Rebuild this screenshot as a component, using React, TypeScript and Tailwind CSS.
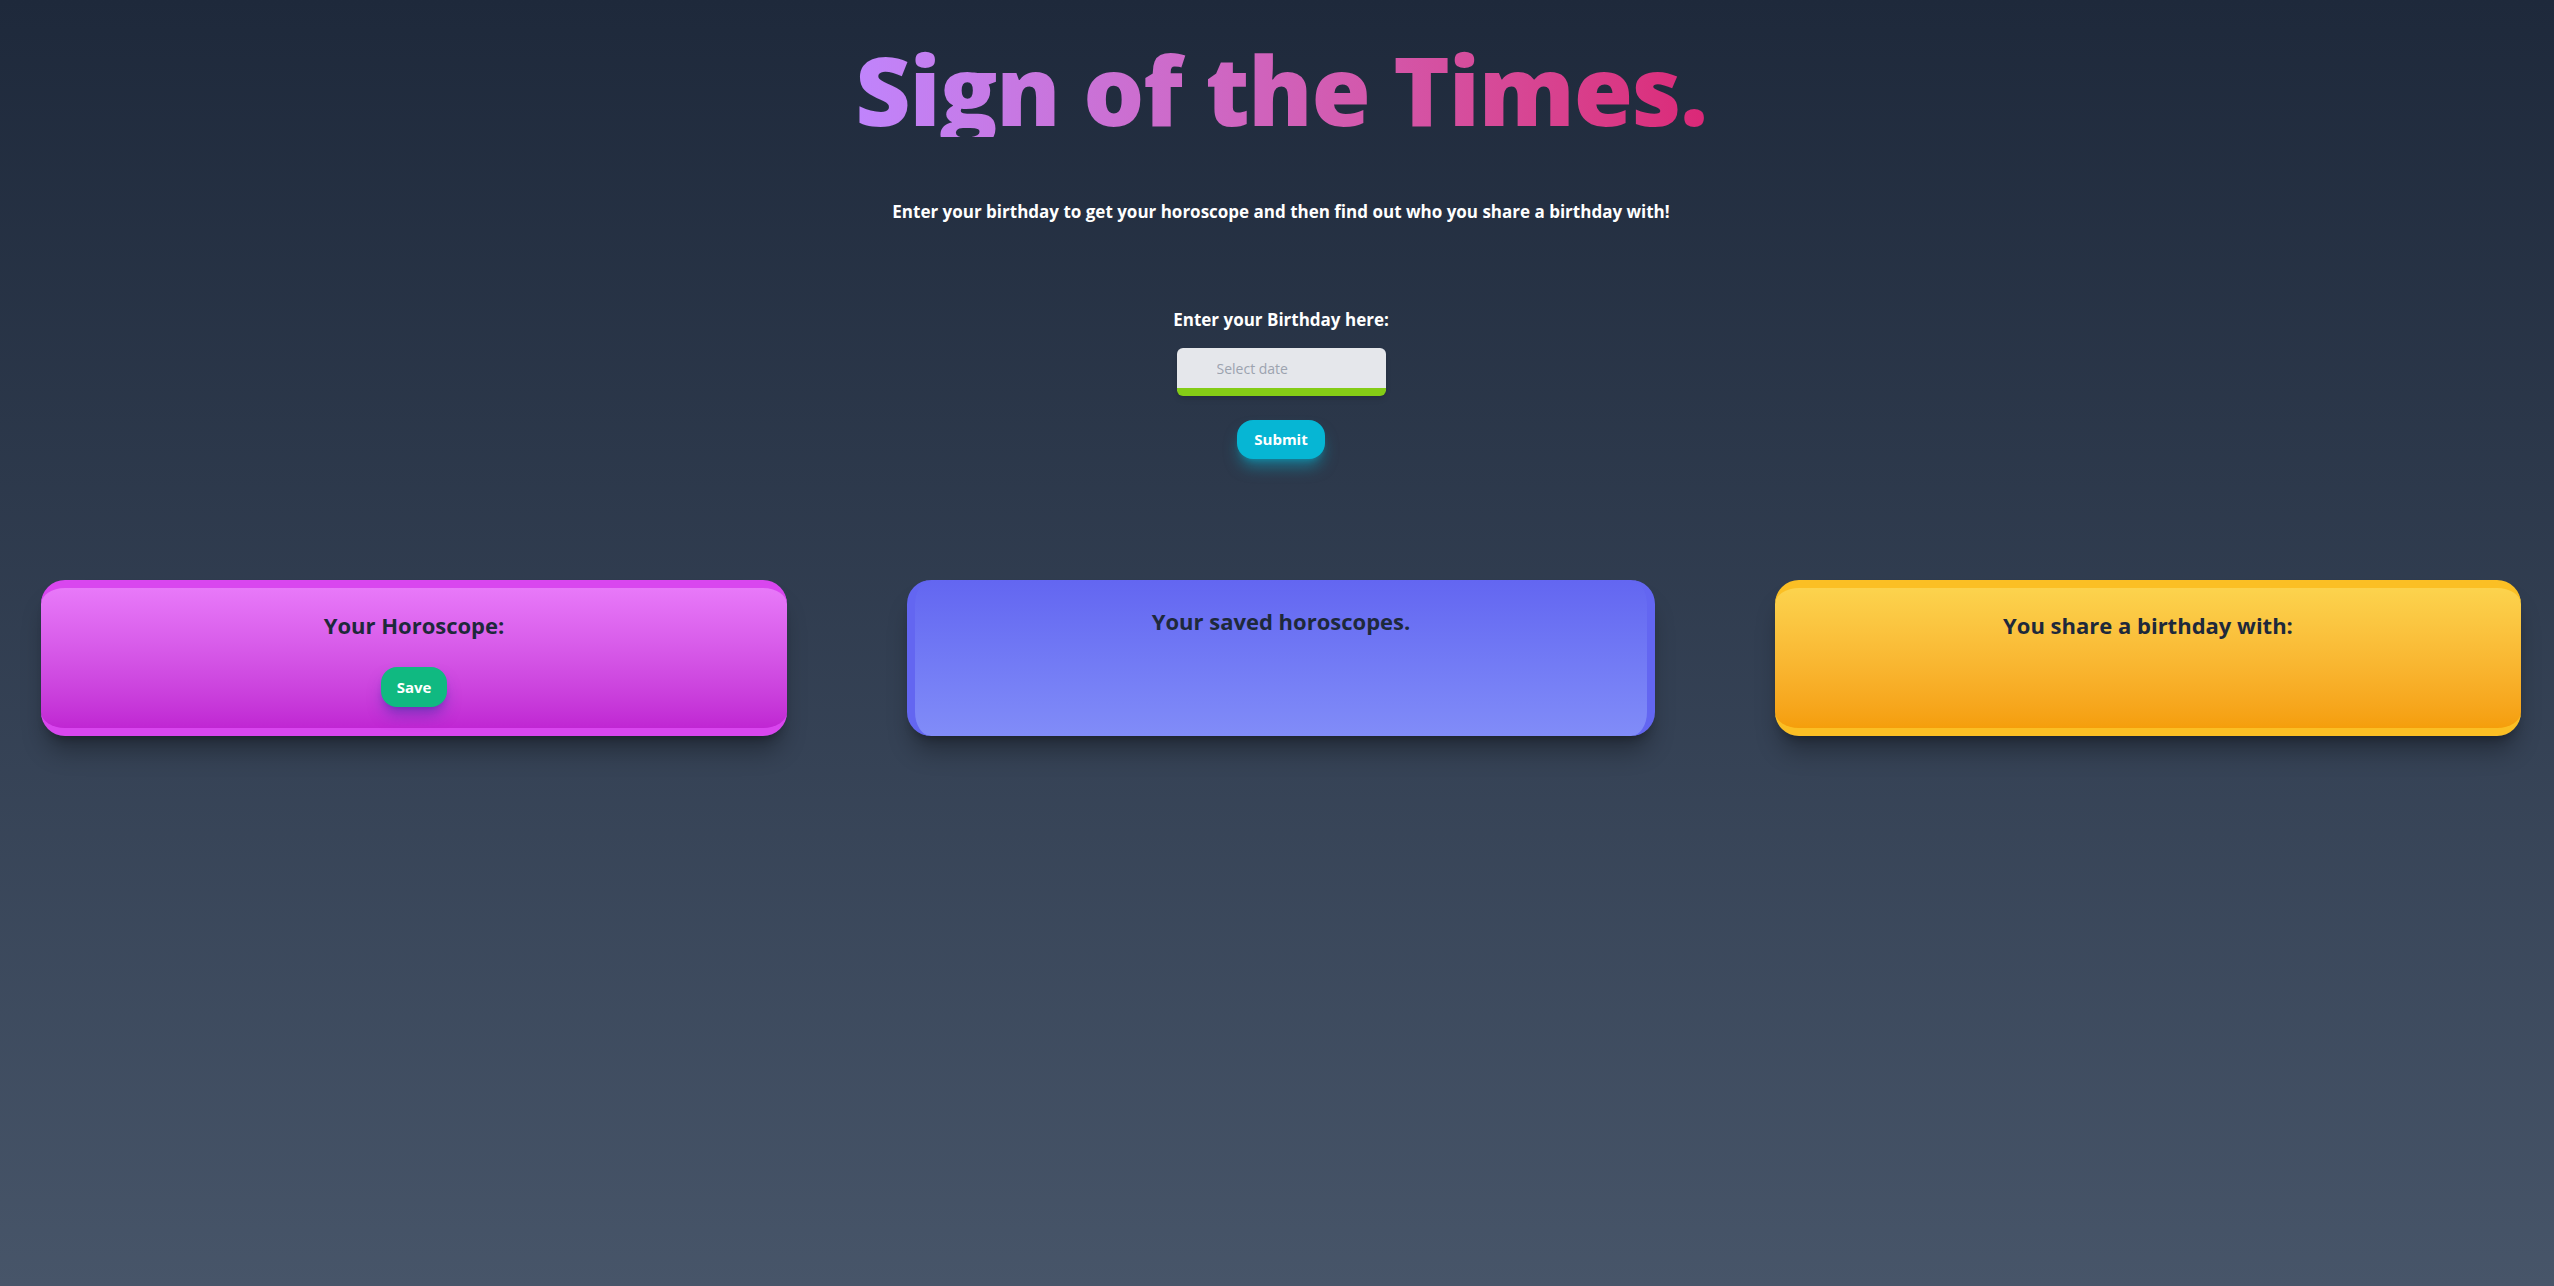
import { useState } from "react";

const font = { fontFamily: "'Open Sans', Lato, sans-serif" };

export default function App() {
  const [date, setDate] = useState("");

  return (
    <div
      className="min-h-screen w-full bg-gradient-to-b from-[#1e293b] to-[#475569] pl-2"
      style={font}
    >
      <div className="flex flex-col items-center">
        {/* Title */}
        <h1 className="mt-[41px] text-8xl leading-none font-extrabold tracking-[-1.2px] bg-gradient-to-r from-[#c084fc] to-[#db2777] bg-clip-text text-transparent">
          Sign of the Times.
        </h1>

        <p className="mt-[61px] text-[17px] leading-7 font-bold text-white">
          Enter your birthday to get your horoscope and then find out who you share a birthday with!
        </p>

        {/* Birthday form */}
        <label className="mt-[80px] text-[17px] leading-7 font-bold text-white">Enter your Birthday here:</label>
        <input
          type="text"
          value={date}
          onChange={(e) => setDate(e.target.value)}
          placeholder="Select date"
          className="mt-[14px] h-12 w-[209px] rounded-md border-b-8 border-[#84cc16] bg-[#e5e7eb] pl-10 text-sm text-gray-700 placeholder:text-[#9ca3af] shadow-md outline-none"
        />
        <button className="mt-6 h-[39px] rounded-2xl bg-[#06b6d4] px-[17px] text-[15px] font-bold text-white shadow-lg shadow-[#06b6d4]/50">
          Submit
        </button>
      </div>

      {/* Cards */}
      <div className="mt-[121px] flex gap-[120px] px-[33px]">
        <div className="flex h-[156px] w-[746px] flex-col items-center rounded-3xl border-y-8 border-[#d946ef] bg-gradient-to-b from-[#e879f9] to-[#c026d3] pt-[21px] shadow-xl shadow-black/30">
          <h2 className="text-[22px] leading-8 font-bold text-[#1e293b]">Your Horoscope:</h2>
          <button className="mt-[26px] h-10 rounded-2xl bg-[#10b981] px-4 text-[15px] font-bold text-white shadow-lg shadow-[#3730a3]/50">
            Save
          </button>
        </div>

        <div className="flex h-[156px] w-[748px] flex-col items-center rounded-3xl border-x-8 border-[#6366f1] bg-gradient-to-b from-[#6366f1] to-[#818cf8] pt-[25px] shadow-xl shadow-black/30">
          <h2 className="text-[22px] leading-8 font-bold text-[#1e293b]">Your saved horoscopes.</h2>
        </div>

        <div className="flex h-[156px] w-[746px] flex-col items-center rounded-3xl border-y-8 border-[#fbbf24] bg-gradient-to-b from-[#fcd34d] to-[#f59e0b] pt-[21px] shadow-xl shadow-black/30">
          <h2 className="text-[22px] leading-8 font-bold text-[#1e293b]">You share a birthday with:</h2>
        </div>
      </div>
    </div>
  );
}
